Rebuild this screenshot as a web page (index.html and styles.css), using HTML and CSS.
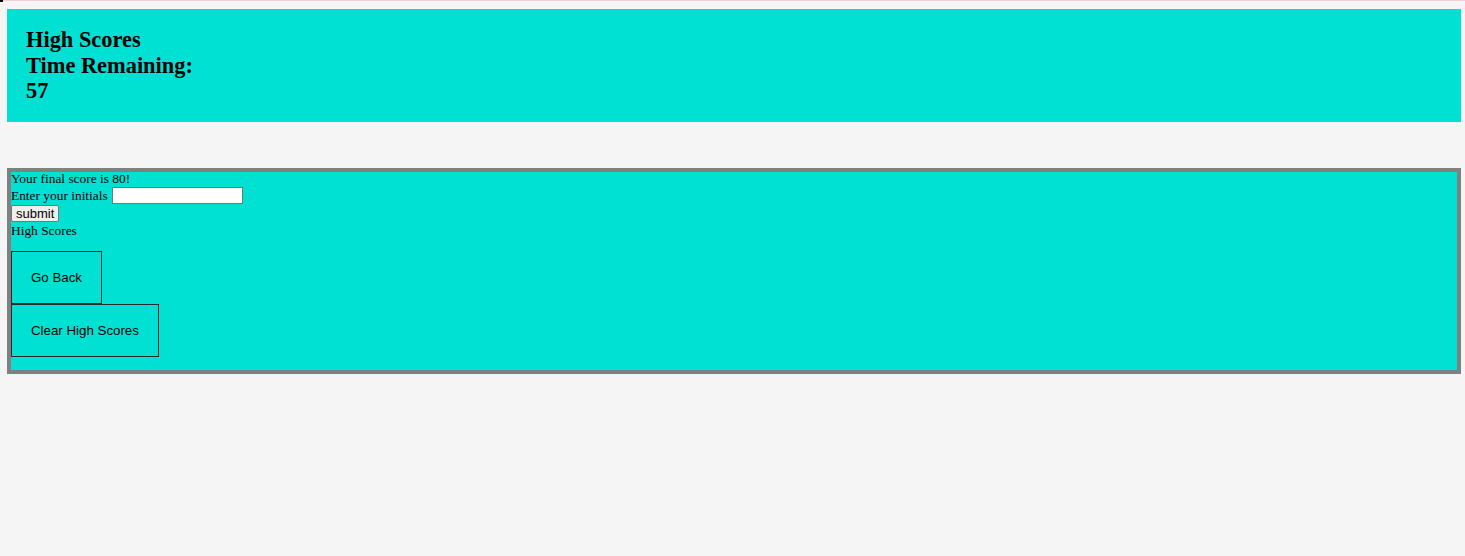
FILE: index.html
```html
<!DOCTYPE html>
<html>
<head>
<meta charset="utf-8">
<title>Quiz</title>
<link rel="stylesheet" href="styles.css">
</head>
<body>
<div class="topline"><span class="mark"></span></div>
<div class="page">
  <header class="header">
    <div class="h-line">High Scores</div>
    <div class="h-line">Time Remaining:</div>
    <div class="h-line">57</div>
  </header>
  <section class="panel">
    <div class="line line-first">Your final score is 80!</div>
    <div class="line line-input">Enter your initials <input class="initials" type="text"></div>
    <div class="line line-btn"><button class="submit">submit</button></div>
    <div class="line">High Scores</div>
    <div class="actions">
      <button class="action">Go Back</button>
      <button class="action">Clear High Scores</button>
    </div>
  </section>
</div>
</body>
</html>
```
FILE: styles.css
```css
html, body {
  margin: 0;
  padding: 0;
  background: #f5f5f5;
}
body {
  font-family: "Liberation Serif", "Times New Roman", serif;
  color: #000;
}
.topline {
  height: 1px;
  background: #f1cfd6;
  display: flex;
}
.mark {
  width: 3px;
  height: 2px;
  background: #000;
}
.page {
  padding: 8px 4px 0 7px;
}
.header {
  background: #01e1d3;
  height: 113px;
  box-sizing: border-box;
  padding: 18px 19px;
  font-weight: bold;
  font-size: 22.4px;
  line-height: 25.5px;
}
.panel {
  margin-top: 46px;
  border: 4px solid #808080;
  background: #01e1d3;
  height: 206px;
  box-sizing: border-box;
  font-size: 13.4px;
  display: flex;
  flex-direction: column;
  align-items: flex-start;
}
.line {
  line-height: 15px;
}
.line-first {
  height: 14px;
  line-height: 13px;
}
.line-input {
  height: 19px;
  display: flex;
  align-items: center;
  line-height: 15px;
}
.initials {
  width: 131px;
  height: 17px;
  box-sizing: border-box;
  margin: 0 0 0 4px;
  padding: 0 2px;
  border: 1px solid #767676;
  background: #fff;
  font-size: 13px;
}
.line-btn {
  height: 18px;
  display: flex;
}
.submit {
  width: 48px;
  height: 17px;
  box-sizing: border-box;
  margin: 0;
  padding: 0 4px;
  font-family: "Liberation Sans", Arial, sans-serif;
  font-size: 13px;
  line-height: 15px;
  background: #efefef;
  border: 1px solid #767676;
  border-radius: 2px;
  color: #000;
}
.actions {
  margin-top: 13px;
  display: flex;
  flex-direction: column;
  align-items: flex-start;
}
.action {
  margin: 0;
  height: 53px;
  padding: 0 19px;
  box-sizing: border-box;
  background: #01e1d3;
  border: 1px solid #2a2a2a;
  border-radius: 0;
  font-family: "Liberation Sans", Arial, sans-serif;
  font-size: 13.3px;
  color: #000;
}
```
